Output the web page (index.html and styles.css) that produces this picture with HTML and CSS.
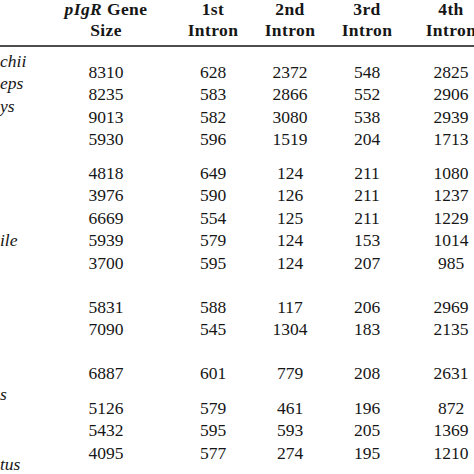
FILE: index.html
```html
<!DOCTYPE html>
<html lang="en">
<head>
<meta charset="utf-8">
<title>pIgR gene structure</title>
<link rel="stylesheet" href="styles.css">
</head>
<body>
<div class="table">
  <div class="head cols">
    <div class="hcell"></div>
    <div class="hcell"><i>pIgR</i> Gene<br>Size</div>
    <div class="hcell">1st<br>Intron</div>
    <div class="hcell">2nd<br>Intron</div>
    <div class="hcell">3rd<br>Intron</div>
    <div class="hcell">4th<br>Intron</div>
  </div>
  <div class="rule"></div>
  <div class="body">
    <div class="labels">
      <div class="label">chii</div>
      <div class="label">eps</div>
      <div class="label">ys</div>
      <div class="label gap-ile">ile</div>
      <div class="label gap-s">s</div>
      <div class="label gap-tus">tus</div>
    </div>
    <div class="data">
      <div class="group data-cols">
        <span>8310</span><span>628</span><span>2372</span><span>548</span><span>2825</span>
        <span>8235</span><span>583</span><span>2866</span><span>552</span><span>2906</span>
        <span>9013</span><span>582</span><span>3080</span><span>538</span><span>2939</span>
        <span>5930</span><span>596</span><span>1519</span><span>204</span><span>1713</span>
      </div>
      <div class="group data-cols g2">
        <span>4818</span><span>649</span><span>124</span><span>211</span><span>1080</span>
        <span>3976</span><span>590</span><span>126</span><span>211</span><span>1237</span>
        <span>6669</span><span>554</span><span>125</span><span>211</span><span>1229</span>
        <span>5939</span><span>579</span><span>124</span><span>153</span><span>1014</span>
        <span>3700</span><span>595</span><span>124</span><span>207</span><span>985</span>
      </div>
      <div class="group data-cols g3">
        <span>5831</span><span>588</span><span>117</span><span>206</span><span>2969</span>
        <span>7090</span><span>545</span><span>1304</span><span>183</span><span>2135</span>
      </div>
      <div class="group data-cols g4">
        <span>6887</span><span>601</span><span>779</span><span>208</span><span>2631</span>
      </div>
      <div class="group data-cols g5">
        <span>5126</span><span>579</span><span>461</span><span>196</span><span>872</span>
        <span>5432</span><span>595</span><span>593</span><span>205</span><span>1369</span>
        <span>4095</span><span>577</span><span>274</span><span>195</span><span>1210</span>
      </div>
    </div>
  </div>
</div>
</body>
</html>
```

FILE: styles.css
```css
html, body {
  margin: 0;
  padding: 0;
  background: #ffffff;
  overflow: hidden;
}

body {
  width: 474px;
  height: 474px;
  font-family: "Liberation Serif", "Times New Roman", serif;
  font-size: 17.5px;
  color: #161616;
}

.table {
  width: 497px;
}

.cols {
  display: grid;
  grid-template-columns: 37.5px 137px 77px 77px 77px 91px;
}

.head {
  margin-top: -1px;
  line-height: 21px;
  font-weight: bold;
  letter-spacing: 0.4px;
}

.hcell {
  text-align: center;
  white-space: nowrap;
}

.rule {
  margin-top: 4px;
  height: 2px;
  background: #4d4d4d;
}

.body {
  display: flex;
}

.labels {
  flex: none;
  width: 37.5px;
  padding-top: 2.85px;
  font-style: italic;
  line-height: 22.5px;
  white-space: nowrap;
}

.label.gap-ile { margin-top: 112px; }
.label.gap-s { margin-top: 131px; }
.label.gap-tus { margin-top: 47.5px; }

.data {
  flex: none;
  padding-top: 13.85px;
}

.data-cols {
  display: grid;
  grid-template-columns: 137px 77px 77px 77px 91px;
  line-height: 22.5px;
  text-align: center;
}

.group.g2 { margin-top: 11px; }
.group.g3 { margin-top: 21.5px; }
.group.g4 { margin-top: 21px; }
.group.g5 { margin-top: 12.5px; }
```
